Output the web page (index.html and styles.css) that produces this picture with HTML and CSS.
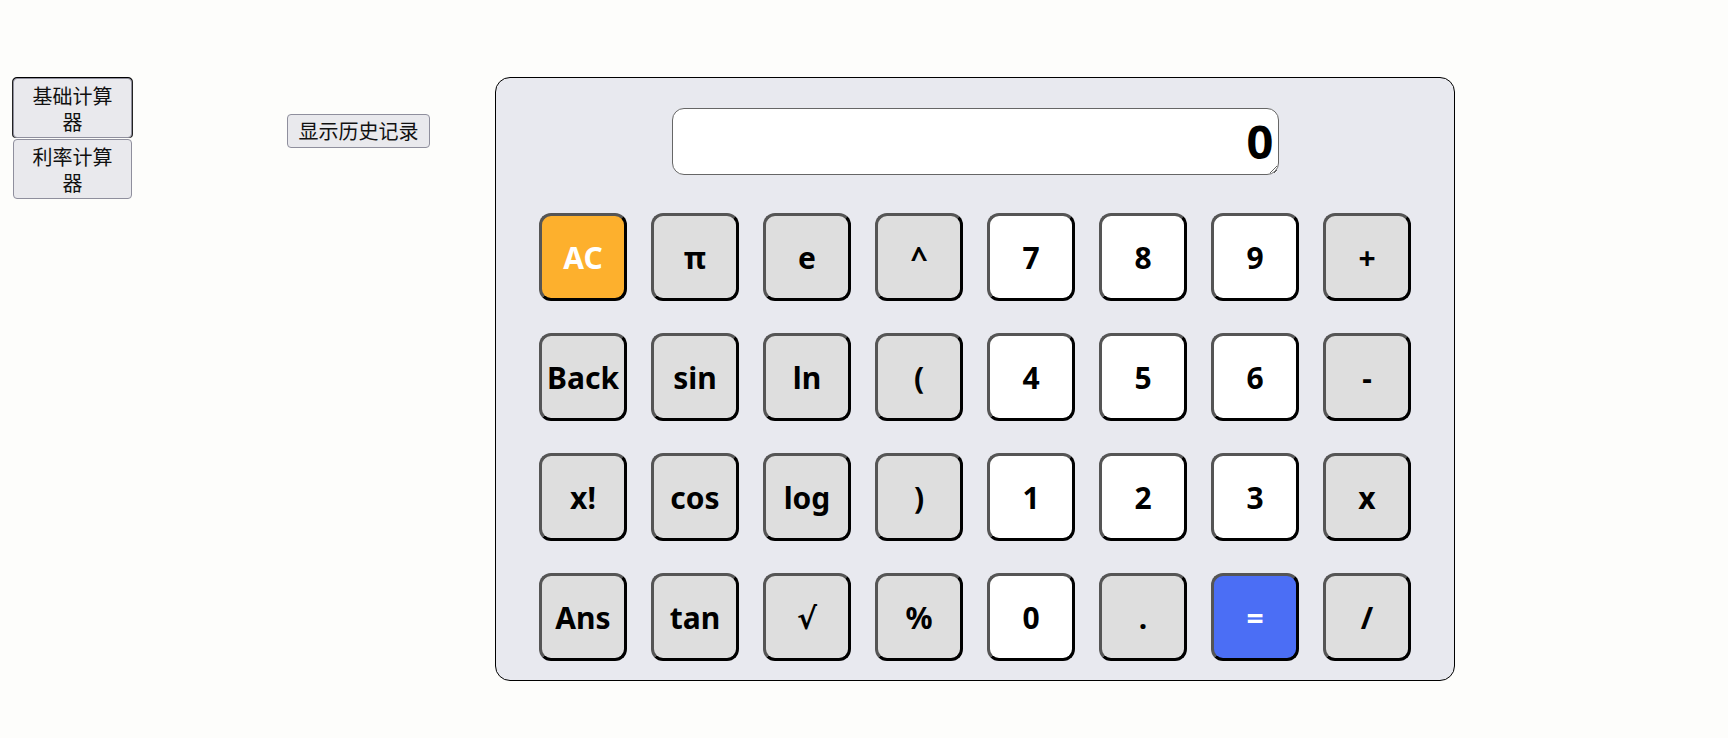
FILE: index.html
```html
<!DOCTYPE html>
<html lang="zh-CN">
<head>
<meta charset="utf-8">
<title>计算器</title>
<link rel="stylesheet" href="styles.css">
</head>
<body>
<div class="page">
  <nav class="sidebar">
    <button class="tab tab-active">基础计算器</button>
    <button class="tab">利率计算器</button>
  </nav>
  <button class="history">显示历史记录</button>
  <main class="calc">
    <textarea class="display" readonly>0</textarea>
    <div class="keys">
      <button class="key key-clear">AC</button>
      <button class="key">π</button>
      <button class="key">e</button>
      <button class="key">^</button>
      <button class="key key-num">7</button>
      <button class="key key-num">8</button>
      <button class="key key-num">9</button>
      <button class="key">+</button>

      <button class="key">Back</button>
      <button class="key">sin</button>
      <button class="key">ln</button>
      <button class="key">(</button>
      <button class="key key-num">4</button>
      <button class="key key-num">5</button>
      <button class="key key-num">6</button>
      <button class="key">-</button>

      <button class="key">x!</button>
      <button class="key">cos</button>
      <button class="key">log</button>
      <button class="key">)</button>
      <button class="key key-num">1</button>
      <button class="key key-num">2</button>
      <button class="key key-num">3</button>
      <button class="key">x</button>

      <button class="key">Ans</button>
      <button class="key">tan</button>
      <button class="key">√</button>
      <button class="key">%</button>
      <button class="key key-num">0</button>
      <button class="key">.</button>
      <button class="key key-equals">=</button>
      <button class="key">/</button>
    </div>
  </main>
</div>
</body>
</html>
```

FILE: styles.css
```css
body {
  margin: 8px;
  background: #fdfdfb;
  font-family: "Noto Sans", "Noto Sans CJK SC", sans-serif;
}

.page {
  display: flex;
  align-items: flex-start;
}

.sidebar {
  display: flex;
  flex-direction: column;
  gap: 1px;
  margin: 70px 0 0 5px;
  width: 119px;
}

.tab,
.history {
  box-sizing: border-box;
  font-family: "Noto Sans CJK SC", sans-serif;
  font-size: 20px;
  line-height: 26px;
  color: #111;
  background: #e9e9ed;
  border: 1px solid #8f8f9d;
  border-radius: 4px;
}

.tab {
  width: 119px;
  height: 60px;
  padding: 4px 10px 2px;
}

.tab-active {
  box-shadow: 0 -1px 0 #000, -1px 0 0 #222, 1px 0 0 #222;
}

.history {
  width: 143px;
  height: 34px;
  padding: 3px 0;
  margin: 106px 0 0 155px;
}

.calc {
  box-sizing: border-box;
  width: 960px;
  margin: 69px 0 0 65px;
  padding: 30px 43px 19px;
  border: 1px solid #000;
  border-radius: 15px;
  background: #e8e9ef;
  display: flex;
  flex-direction: column;
  align-items: center;
}

.display {
  box-sizing: border-box;
  width: 607px;
  height: 67px;
  margin: 0 0 38px;
  padding: 2px 4px 2px 2px;
  border: 1px solid #666;
  border-radius: 12px;
  background: #fff;
  font-family: "Noto Sans", sans-serif;
  font-weight: bold;
  font-size: 47px;
  line-height: 60px;
  text-align: right;
  color: #000;
  overflow: hidden;
  outline: none;
}

.keys {
  display: grid;
  grid-template-columns: repeat(8, 88px);
  grid-auto-rows: 88px;
  column-gap: 24px;
  row-gap: 32px;
}

.key {
  box-sizing: border-box;
  width: 88px;
  height: 88px;
  padding: 0;
  border: 3px solid;
  border-color: #555 #000 #000 #555;
  border-radius: 12px;
  background: #dedede;
  color: #000;
  font-family: "Noto Sans", "DejaVu Sans", sans-serif;
  font-weight: bold;
  font-size: 30px;
}

.key-num {
  background: #fff;
}

.key-clear {
  background: #fdb02d;
  color: #fff;
}

.key-equals {
  background: #4b6ef5;
  color: #fff;
}
```
